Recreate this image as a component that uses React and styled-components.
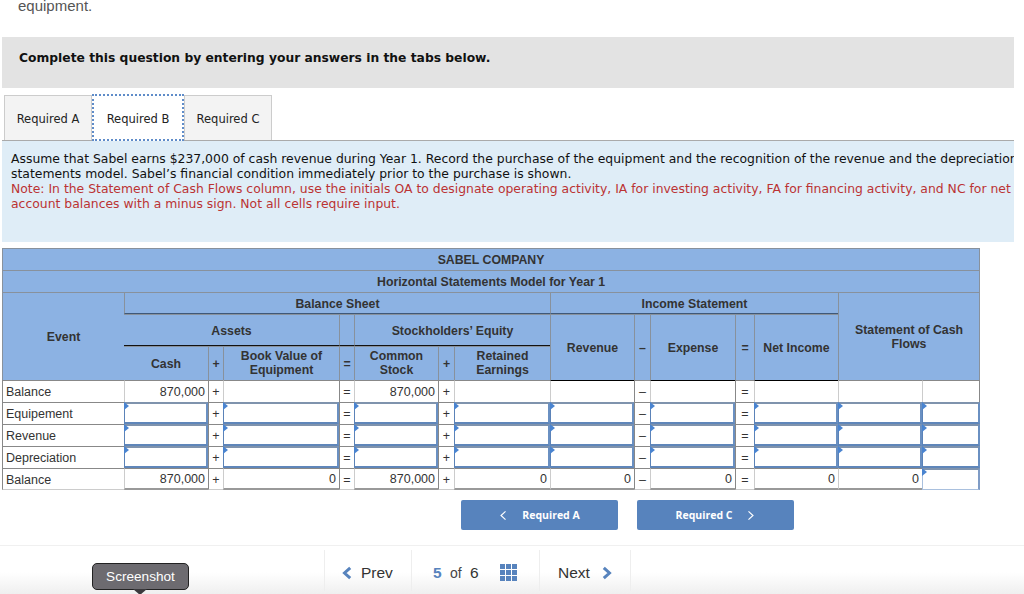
import React from 'react';
import styled, { createGlobalStyle } from 'styled-components';

const GlobalStyle = createGlobalStyle`
  html, body {
    margin: 0;
    padding: 0;
    background: #fff;
  }
  body {
    height: 594px;
    overflow: hidden;
  }
`;

const Page = styled.div`
  width: 1024px;
  height: 594px;
  overflow: hidden;
  display: flex;
  flex-direction: column;
  font-family: "DejaVu Sans", Verdana, sans-serif;
`;

const Content = styled.div`
  flex: 1;
  padding-left: 2px;
  width: 1012px;
`;

const CutOffLine = styled.div`
  height: 15px;
  padding-left: 16px;
  display: flex;
  align-items: flex-end;
  font: 15px/18px "Liberation Sans", Arial, sans-serif;
  color: #555;
  overflow: hidden;
`;

const Banner = styled.div`
  margin-top: 22px;
  height: 51px;
  box-sizing: border-box;
  background: #e3e3e3;
  display: flex;
  align-items: center;
  padding: 0 0 9px 17px;
  font-size: 12.3px;
  font-weight: bold;
  color: #111;
`;

const TabBar = styled.div`
  margin-top: 7px;
  height: 45px;
  padding-left: 2px;
  display: flex;
  border-bottom: 1px solid #aaa;
`;

const Tab = styled.div`
  position: relative;
  width: ${(p) => p.$w}px;
  box-sizing: border-box;
  padding-top: ${(p) => (p.$active ? 2 : 1)}px;
  display: flex;
  align-items: center;
  justify-content: center;
  font-size: 11.5px;
  color: #222;
  background: ${(p) => (p.$active ? '#fff' : '#f3f3f3')};
  border: ${(p) => (p.$active ? '2px dotted #5f8cc9' : '1px solid #ccc')};
  border-bottom: ${(p) => (p.$active ? '2px dotted #5f8cc9' : 'none')};
  height: ${(p) => (p.$active ? '47px' : '45px')};
  margin-top: ${(p) => (p.$active ? '-1px' : '0')};
`;

const InfoPanel = styled.div`
  height: 101px;
  box-sizing: border-box;
  padding: 10px 0 0 9px;
  background: #dfedf7;
  font-size: 12.4px;
  line-height: 15px;
  color: #111;
  overflow: hidden;
  white-space: nowrap;
`;

const Note = styled.div`
  color: #bb3333;
`;

const Model = styled.table`
  margin-top: 6px;
  width: 978px;
  table-layout: fixed;
  border-collapse: separate;
  border-spacing: 0;
  font-family: "Liberation Sans", Arial, sans-serif;
  font-size: 12.5px;
  color: #333;
`;

const Col = styled.col`
  width: ${(p) => p.$w}px;
`;

const Head = styled.th`
  box-sizing: border-box;
  padding: ${(p) => (p.$under ? '1px' : '0')} 0 ${(p) => (p.$lift ? '2px' : '0')};
  height: ${(p) => p.$h || 22}px;
  background: #8cb2e3;
  font-size: 12.3px;
  font-weight: bold;
  line-height: 14px;
  text-align: center;
  border-top: 1px solid #88919c;
  border-left: ${(p) => (p.$noLeft ? 'none' : '1px solid #88919c')};
  border-right: ${(p) => (p.$edge ? '1px solid #88919c' : 'none')};
  border-bottom: ${(p) => p.$under || 'none'};
`;

const Cell = styled.td`
  box-sizing: border-box;
  height: 22px;
  padding: 1px ${(p) => (p.$op ? 0 : 3)}px 0 ${(p) => (p.$first ? 3 : 0)}px;
  background: #fff;
  text-align: ${(p) => (p.$op ? 'center' : p.$first ? 'left' : 'right')};
  line-height: 14px;
  border-top: 1px solid ${(p) => (p.$dark ? '#000' : '#888')};
  border-left: 1px solid ${(p) => (p.$op || p.$first ? '#888' : '#ccc')};
  border-right: ${(p) => (p.$edge ? '1px solid #888' : 'none')};
  border-bottom: ${(p) => (p.$foot ? (p.$thick ? '2px solid #999' : '1px solid #ccc') : 'none')};
`;

const InputCell = styled.td`
  box-sizing: border-box;
  height: 22px;
  padding: 0;
  background: #fff;
`;

const InputBox = styled.div`
  position: relative;
  box-sizing: border-box;
  height: 22px;
  background: #fff;
  border-top: 2px solid #7f93ad;
  border-left: 1px solid ${(p) => (p.$light ? '#a9c0de' : '#5b83b8')};
  border-right: 2px solid ${(p) => (p.$light ? '#7f9cc6' : '#6a90c2')};
  border-bottom: ${(p) => (p.$light ? 1 : 2)}px solid ${(p) => (p.$light ? '#a9c0de' : '#5f86ba')};

  &::before {
    content: '';
    position: absolute;
    left: -1px;
    top: -2px;
    border-left: 5px solid #4a84d0;
    border-top: 4px solid transparent;
    border-bottom: 4px solid transparent;
  }
`;

const Actions = styled.div`
  margin-top: 10px;
  display: flex;
  justify-content: flex-start;
  gap: 19px;
  padding-left: 459px;
`;

const ActionButton = styled.div`
  width: 157px;
  height: 30px;
  border-radius: 2px;
  background: #5783bd;
  color: #fff;
  display: flex;
  align-items: center;
  justify-content: center;
  gap: 15px;
  font-family: "Open Sans", "Liberation Sans", sans-serif;
  font-size: 10.5px;
  font-weight: bold;
`;

const Footer = styled.div`
  height: 49px;
  border-top: 1px solid #f0f0f0;
  box-sizing: border-box;
  background: linear-gradient(to bottom, #fff 55%, #efefef 100%);
  display: flex;
  font-family: "Liberation Sans", Arial, sans-serif;
`;

const ToolSlot = styled.div`
  width: 324px;
  padding: 17px 0 0 92px;
  box-sizing: border-box;
`;

const Tooltip = styled.div`
  position: relative;
  width: 97px;
  height: 27px;
  box-sizing: border-box;
  border: 1px solid #222;
  border-radius: 5px;
  background: #6d6b70;
  color: #fff;
  font-size: 13.6px;
  display: flex;
  align-items: center;
  justify-content: center;

  &::after {
    content: '';
    position: absolute;
    left: 40px;
    bottom: -6px;
    border-left: 7px solid transparent;
    border-right: 7px solid transparent;
    border-top: 6px solid #3a393c;
  }
`;

const NavItem = styled.div`
  width: ${(p) => p.$w}px;
  height: 41px;
  margin-top: 4px;
  box-sizing: border-box;
  border-left: 1px solid #eee;
  border-right: ${(p) => (p.$last ? '1px solid #eee' : 'none')};
  display: flex;
  align-items: center;
  gap: ${(p) => p.$gap}px;
  padding: 4px 0 0 ${(p) => p.$pad}px;
  font-size: 15.5px;
  color: #333;
`;

const PageCount = styled.span`
  font-size: 15.5px;
  word-spacing: 4px;
  color: #333;
  & b {
    color: #5783bd;
  }
  & small {
    font-size: 14px;
    color: #444;
  }
`;

const blueIcon = '#5783bd';

const columns = [122, 84, 15, 116, 15, 84, 16, 96, 84, 16, 85, 19, 84, 84, 58];
const ops = { 2: '+', 4: '=', 6: '+', 9: '–', 11: '=' };

const balanceRow = ['Balance', '870,000', '+', '', '=', '870,000', '+', '', '', '–', '', '=', '', '', ''];
const totalRow = ['Balance', '870,000', '+', '0', '=', '870,000', '+', '0', '0', '–', '0', '=', '0', '0', null];
const entryRows = ['Equipement', 'Revenue', 'Depreciation'];

function GridIcon() {
  const cells = [];
  for (let r = 0; r < 3; r++) {
    for (let c = 0; c < 3; c++) {
      cells.push(<rect key={`${r}-${c}`} x={c * 6} y={r * 6} width="5" height="5" />);
    }
  }
  return (
    <svg width="17" height="17" viewBox="0 0 17 17" fill={blueIcon}>
      {cells}
    </svg>
  );
}

// same chevron for the footer nav (heavy) and the action buttons (thin)
function Chevron({ right, color = blueIcon, weight = 3, w = 10, h = 14 }) {
  const d = right ? 'M1.8 1.8 L7.5 7 L1.8 12.2' : 'M8.2 1.8 L2.5 7 L8.2 12.2';
  return (
    <svg width={w} height={h} viewBox="0 0 10 14" fill="none" stroke={color} strokeWidth={weight}>
      <path d={d} />
    </svg>
  );
}

function ValueRow({ values, foot, dark }) {
  return (
    <tr>
      {values.map((value, i) => {
        if (value === null) {
          return (
            <InputCell key={i}>
              <InputBox $light />
            </InputCell>
          );
        }
        const isOp = Boolean(ops[i]);
        return (
          <Cell
            key={i}
            $first={i === 0}
            $op={isOp}
            $foot={foot}
            $thick={foot && !isOp && i > 0}
            $dark={dark && i >= 8 && i <= 12 && !isOp}
            $edge={i === values.length - 1}
          >
            {value}
          </Cell>
        );
      })}
    </tr>
  );
}

function EntryRow({ label }) {
  return (
    <tr>
      {columns.map((_, i) => {
        if (i === 0) {
          return (
            <Cell key={i} $first>
              {label}
            </Cell>
          );
        }
        if (ops[i]) {
          return (
            <Cell key={i} $op>
              {ops[i]}
            </Cell>
          );
        }
        return (
          <InputCell key={i}>
            <InputBox />
          </InputCell>
        );
      })}
    </tr>
  );
}

export default function App() {
  return (
    <>
      <GlobalStyle />
      <Page>
        <Content>
          <CutOffLine>equipment.</CutOffLine>
          <Banner>Complete this question by entering your answers in the tabs below.</Banner>
          <TabBar>
            <Tab $w={88}>Required A</Tab>
            <Tab $w={92} $active>
              Required B
            </Tab>
            <Tab $w={88}>Required C</Tab>
          </TabBar>
          <InfoPanel>
            <div>
              Assume that Sabel earns $237,000 of cash revenue during Year 1. Record the purchase of the equipment and the recognition of the revenue and the depreciation expense in a horizontal
            </div>
            <div>statements model. Sabel’s financial condition immediately prior to the purchase is shown.</div>
            <Note>
              Note: In the Statement of Cash Flows column, use the initials OA to designate operating activity, IA for investing activity, FA for financing activity, and NC for net change in cash. Show
            </Note>
            <Note>account balances with a minus sign. Not all cells require input.</Note>
          </InfoPanel>
          <Model>
            <colgroup>
              {columns.map((w, i) => (
                <Col key={i} $w={w} />
              ))}
            </colgroup>
            <thead>
              <tr>
                <Head colSpan={15} $edge>
                  SABEL COMPANY
                </Head>
              </tr>
              <tr>
                <Head colSpan={15} $edge>
                  Horizontal Statements Model for Year 1
                </Head>
              </tr>
              <tr>
                <Head rowSpan={3}>Event</Head>
                <Head colSpan={7} $under="1px solid #3f5878">
                  Balance Sheet
                </Head>
                <Head colSpan={5} $under="1px solid #3f5878">
                  Income Statement
                </Head>
                <Head colSpan={2} rowSpan={3} $edge>
                  <div>Statement of Cash</div>
                  <div>Flows</div>
                </Head>
              </tr>
              <tr>
                <Head colSpan={3} $h={32} $noLeft $under="1px solid #111">
                  Assets
                </Head>
                <Head $h={32} $under="1px solid #111" />
                <Head colSpan={3} $h={32} $under="1px solid #111">
                  Stockholders’ Equity
                </Head>
                <Head rowSpan={2}>Revenue</Head>
                <Head rowSpan={2}>–</Head>
                <Head rowSpan={2}>Expense</Head>
                <Head rowSpan={2}>=</Head>
                <Head rowSpan={2}>Net Income</Head>
              </tr>
              <tr>
                <Head $h={34} $noLeft>
                  Cash
                </Head>
                <Head $h={34}>+</Head>
                <Head $h={34} $lift>
                  <div>Book Value of</div>
                  <div>Equipment</div>
                </Head>
                <Head $h={34}>=</Head>
                <Head $h={34} $lift>
                  <div>Common</div>
                  <div>Stock</div>
                </Head>
                <Head $h={34}>+</Head>
                <Head $h={34} $lift>
                  <div>Retained</div>
                  <div>Earnings</div>
                </Head>
              </tr>
            </thead>
            <tbody>
              <ValueRow values={balanceRow} dark />
              {entryRows.map((label) => (
                <EntryRow key={label} label={label} />
              ))}
              <ValueRow values={totalRow} foot />
            </tbody>
          </Model>
          <Actions>
            <ActionButton>
              <Chevron color="#fff" weight={1.5} w={8} h={11} />
              Required A
            </ActionButton>
            <ActionButton>
              Required C
              <Chevron right color="#fff" weight={1.5} w={8} h={11} />
            </ActionButton>
          </Actions>
        </Content>
        <Footer>
          <ToolSlot>
            <Tooltip>Screenshot</Tooltip>
          </ToolSlot>
          <NavItem $w={87} $gap={9} $pad={17}>
            <Chevron />
            Prev
          </NavItem>
          <NavItem $w={128} $gap={21} $pad={21}>
            <PageCount>
              <b>5</b> <small>of</small> 6
            </PageCount>
            <GridIcon />
          </NavItem>
          <NavItem $w={92} $last $gap={12} $pad={18}>
            Next
            <Chevron right />
          </NavItem>
        </Footer>
      </Page>
    </>
  );
}
